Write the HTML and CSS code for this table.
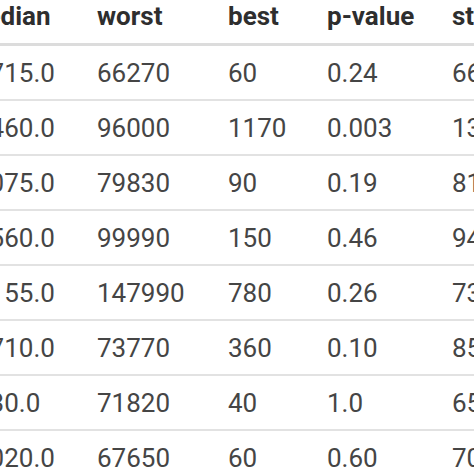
FILE: index.html
```html
<!DOCTYPE html>
<html>
<head>
<meta charset="utf-8">
<link rel="stylesheet" href="styles.css">
</head>
<body>
<div class="viewport">
<table class="results">
  <colgroup>
    <col class="c-median"><col class="c-worst"><col class="c-best"><col class="c-p"><col class="c-std">
  </colgroup>
  <thead>
    <tr><th class="h-median">median</th><th>worst</th><th>best</th><th>p-value</th><th>std</th></tr>
  </thead>
  <tbody>
    <tr><td>6715.0</td><td>66270</td><td>60</td><td>0.24</td><td>6612.3</td></tr>
    <tr><td>4460.0</td><td>96000</td><td>1170</td><td>0.003</td><td>1345.7</td></tr>
    <tr><td>9075.0</td><td>79830</td><td>90</td><td>0.19</td><td>8123.4</td></tr>
    <tr><td>6560.0</td><td>99990</td><td>150</td><td>0.46</td><td>9456.1</td></tr>
    <tr><td>1155.0</td><td>147990</td><td>780</td><td>0.26</td><td>7334.8</td></tr>
    <tr><td>7710.0</td><td>73770</td><td>360</td><td>0.10</td><td>8567.2</td></tr>
    <tr><td>830.0</td><td>71820</td><td>40</td><td>1.0</td><td>6543.9</td></tr>
    <tr><td>9020.0</td><td>67650</td><td>60</td><td>0.60</td><td>7012.5</td></tr>
  </tbody>
</table>
</div>
</body>
</html>
```

FILE: styles.css
```css
html, body {
  margin: 0;
  padding: 0;
  background: #ffffff;
  overflow: hidden;
}
.viewport {
  width: 474px;
  height: 474px;
  overflow: hidden;
}
.results {
  margin-left: -25px;
  border-collapse: collapse;
  table-layout: fixed;
  width: 600px;
  font-family: Roboto, "Liberation Sans", sans-serif;
  font-size: 26px;
  line-height: 30px;
}
.c-median { width: 122px; }
.c-worst { width: 131px; }
.c-best { width: 99px; }
.c-p { width: 125px; }
.c-std { width: 123px; }
.results th {
  text-align: left;
  font-weight: 700;
  color: #2e2e2e;
  padding: 1px 0 12px 0;
  border-bottom: 3px solid #dcdcdc;
  white-space: nowrap;
}
.results th.h-median {
  text-indent: -11px;
}
.results td {
  text-align: left;
  font-weight: 400;
  color: #454545;
  padding: 12px 0 11px 0;
  border-bottom: 2px solid #e2e2e2;
  white-space: nowrap;
}
```
